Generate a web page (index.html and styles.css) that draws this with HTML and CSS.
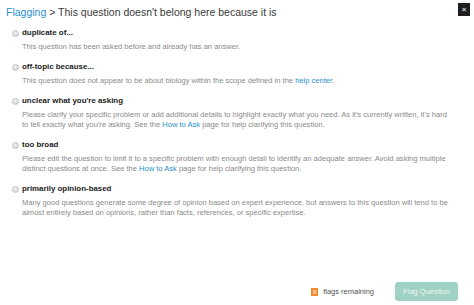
FILE: index.html
```html
<!DOCTYPE html>
<html>
<head>
<meta charset="utf-8">
<link rel="stylesheet" href="styles.css">
</head>
<body>
<div class="dialog">
  <div class="header">
    <h1 class="title"><a class="link" href="#">Flagging</a> &gt; This question doesn't belong here because it is</h1>
    <span class="close">&#215;</span>
  </div>
  <ul class="options">
    <li class="option">
      <label class="label"><span class="radio"></span>duplicate of...</label>
      <p class="desc">This question has been asked before and already has an answer.</p>
    </li>
    <li class="option">
      <label class="label"><span class="radio"></span>off-topic because...</label>
      <p class="desc">This question does not appear to be about biology within the scope defined in the <a class="link" href="#">help center</a>.</p>
    </li>
    <li class="option">
      <label class="label"><span class="radio"></span>unclear what you're asking</label>
      <p class="desc">Please clarify your specific problem or add additional details to highlight exactly what you need. As it's currently written, it's hard to tell exactly what you're asking. See the <a class="link" href="#">How to Ask</a> page for help clarifying this question.</p>
    </li>
    <li class="option">
      <label class="label"><span class="radio"></span>too broad</label>
      <p class="desc">Please edit the question to limit it to a specific problem with enough detail to identify an adequate answer. Avoid asking multiple distinct questions at once. See the <a class="link" href="#">How to Ask</a> page for help clarifying this question.</p>
    </li>
    <li class="option">
      <label class="label"><span class="radio"></span>primarily opinion-based</label>
      <p class="desc">Many good questions generate some degree of opinion based on expert experience, but answers to this question will tend to be almost entirely based on opinions, rather than facts, references, or specific expertise.</p>
    </li>
  </ul>
  <div class="footer">
    <span class="badge">9</span>
    <span class="remaining">flags remaining</span>
    <button class="flag-btn" disabled>Flag Question</button>
  </div>
</div>
</body>
</html>
```
FILE: styles.css
```css
html, body {
  margin: 0;
  padding: 0;
  background: #ffffff;
}
body {
  font-family: "Liberation Sans", Arial, sans-serif;
}
.dialog {
  height: 305px;
  display: flex;
  flex-direction: column;
  box-sizing: border-box;
}
.header {
  display: flex;
  justify-content: space-between;
  align-items: flex-start;
  padding: 3px 4px 0 6px;
}
.title {
  margin: 0;
  padding-top: 2px;
  font-size: 10.5px;
  line-height: 14px;
  font-weight: normal;
  color: #3a3a3a;
}
.link {
  color: #2a8fcb;
  text-decoration: none;
}
.close {
  width: 12px;
  height: 13px;
  background: #1e1e1e;
  color: #d8d8d8;
  font-size: 8px;
  line-height: 13px;
  text-align: center;
  font-weight: bold;
}
.options {
  list-style: none;
  margin: 0;
  padding: 9px 0 0 12px;
}
.option {
  margin-bottom: 10px;
}
.label {
  display: flex;
  align-items: center;
  gap: 3px;
  font-size: 7.9px;
  line-height: 10px;
  font-weight: bold;
  color: #222222;
}
.radio {
  width: 7px;
  height: 7px;
  border-radius: 50%;
  box-sizing: border-box;
  border: 1px solid #c4c4c4;
  background: radial-gradient(circle at 40% 35%, #f4f4f4 0%, #dcdcdc 60%, #cfcfcf 100%);
}
.desc {
  margin: 4px 0 0 10px;
  width: 430px;
  font-size: 7.55px;
  line-height: 10px;
  color: #8a8a8a;
}
.footer {
  margin-top: auto;
  display: flex;
  justify-content: flex-end;
  align-items: center;
  padding: 0 16px 4px 0;
}
.badge {
  width: 7px;
  height: 8px;
  background: #f08a2c;
  color: #ffffff;
  font-size: 6px;
  line-height: 8px;
  text-align: center;
  margin-right: 5px;
}
.remaining {
  font-size: 7.5px;
  color: #555555;
  margin-right: 21px;
}
.flag-btn {
  width: 63px;
  height: 19px;
  padding: 0;
  border: none;
  border-radius: 3px;
  background: #9fd1c4;
  color: #eef8f5;
  font-family: "Liberation Sans", Arial, sans-serif;
  font-size: 7.5px;
}
```
